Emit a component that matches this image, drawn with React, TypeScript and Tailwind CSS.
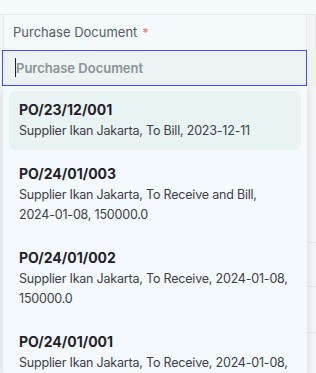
import React from 'react';

const options = [
  {
    name: 'PO/23/12/001',
    lines: ['Supplier Ikan Jakarta, To Bill, 2023-12-11'],
  },
  {
    name: 'PO/24/01/003',
    lines: ['Supplier Ikan Jakarta, To Receive and Bill,', '2024-01-08, 150000.0'],
  },
  {
    name: 'PO/24/01/002',
    lines: ['Supplier Ikan Jakarta, To Receive, 2024-01-08,', '150000.0'],
  },
  {
    name: 'PO/24/01/001',
    lines: ['Supplier Ikan Jakarta, To Receive, 2024-01-08,', '150000.0'],
  },
];

export default function App() {
  return (
    <div
      className="h-[373px] w-[316px] overflow-hidden bg-[#f4f9fc]"
      style={{ fontFamily: 'Inter, "Noto Sans", sans-serif' }}
    >
      <div className="h-[14px]" />
      <div className="flex h-[359px] border-t border-[#e4e9ed]">
        <div className="w-[3px] shrink-0 bg-[#f1f5f8]" />
        {/* form column */}
        <div className="flex w-[304px] shrink-0 flex-col border-x border-[#e6ebee]">
          <div className="flex h-[35px] items-center pl-[9px] text-[13px] text-[#555c63]">
            Purchase Document
            <span className="ml-[5px] text-[12px] text-[#f26d6d]">*</span>
          </div>
          <div className="relative -ml-[2px] -mr-px h-[36px] border border-[#4a4cf0] bg-[#ebf4f3]">
            <input
              className="h-full w-full bg-transparent pl-[13px] text-[13px] font-semibold text-[#1f2328] outline-none placeholder:text-[#8b9298]"
              placeholder="Purchase Document"
              readOnly
            />
            <span className="absolute left-[12px] top-[7px] h-[19px] w-px bg-[#1f2328]" />
          </div>
          <div className="relative flex-1">
            {/* dropdown */}
            <div className="absolute inset-x-[-1px] top-0 bottom-0 bg-[#f4f9fd] px-[6px] pt-[5px] shadow-[0_2px_8px_rgba(0,0,0,0.12)]">
              <ul className="flex flex-col gap-[5px]">
                {options.map((o, i) => (
                  <li
                    key={o.name}
                    className={`rounded-[7px] px-[10px] pt-[9px] pb-[9px] ${i === 0 ? 'bg-[#eaf3f3]' : ''}`}
                  >
                    <div className="text-[14px] font-bold leading-[20px] text-[#1f2328]">{o.name}</div>
                    <div className="mt-px whitespace-nowrap text-[12.5px] leading-[20px] tracking-[-0.2px] text-[#3a4046]">
                      {o.lines.map((l) => (
                        <div key={l}>{l}</div>
                      ))}
                    </div>
                  </li>
                ))}
              </ul>
            </div>
          </div>
        </div>
        {/* next column, mostly hidden */}
        <div className="flex flex-1 flex-col bg-[#f1f5f8]">
          <div className="h-[35px] border-r border-[#e6ebee]" />
          <div className="h-[36px] bg-[#eef3ea]" />
          <div className="h-[156px]" />
          <div className="h-[44px] border-t border-[#e3e8ec]" />
          <div className="h-[46px] border-t border-[#e3e8ec]" />
          <div className="flex-1 border-t border-[#e3e8ec]" />
        </div>
      </div>
    </div>
  );
}
